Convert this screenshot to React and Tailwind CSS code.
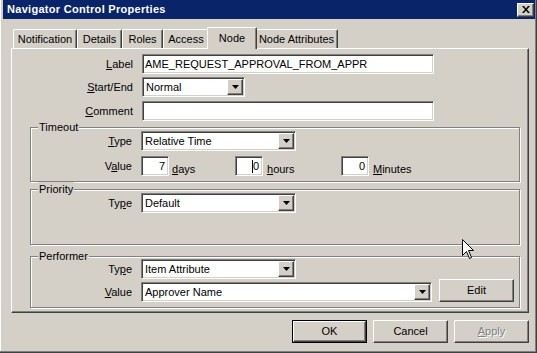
import React from "react";

const sunken =
  "bg-white border border-t-[#808080] border-l-[#808080] border-b-white border-r-white shadow-[inset_1px_1px_0_#404040,inset_-1px_-1px_0_#d4d0c8]";
const raised =
  "bg-[#d4d0c8] border border-t-white border-l-white border-r-[#404040] border-b-[#404040] shadow-[inset_-1px_-1px_0_#808080]";

function Arrow() {
  return (
    <div className={`w-[16px] h-[16px] shrink-0 flex items-center justify-center ${raised}`}>
      <svg width="7" height="4" viewBox="0 0 7 4">
        <path d="M0 0h7L3.5 4z" fill="black" />
      </svg>
    </div>
  );
}

function Select({ w, value }) {
  return (
    <div className={`flex h-[20px] p-[1px] ${w} ${sunken}`}>
      <div className="flex-1 pl-[2px] leading-[16px] whitespace-nowrap overflow-hidden">{value}</div>
      <Arrow />
    </div>
  );
}

function Input({ w, value, right }) {
  return (
    <div
      className={`flex items-center h-[20px] ${right ? "justify-end pr-[3px]" : "pl-[2px]"} ${w} ${sunken}`}
    >
      {value}
    </div>
  );
}

function Lbl({ w, children }) {
  return <div className={`${w} text-right mr-[9px] shrink-0`}>{children}</div>;
}

function Group({ title, className, children }) {
  return (
    <div
      className={`relative ml-[18px] w-[490px] border border-[#808080] shadow-[1px_1px_0_#fff,inset_1px_1px_0_#fff] ${className}`}
    >
      <div className="absolute left-[7px] top-[-8px] bg-[#d4d0c8] px-[1px] leading-[14px]">{title}</div>
      {children}
    </div>
  );
}

function Tab({ w, children }) {
  return (
    <div
      className={`h-[19px] ${w} border-t border-l border-t-white border-l-white border-r border-r-[#404040] shadow-[inset_-1px_0_0_#808080] rounded-t-[2px] flex items-center justify-center leading-[14px]`}
    >
      {children}
    </div>
  );
}

function Btn({ children, def, disabled }) {
  const inner = (
    <div
      className={`w-full h-full flex items-center justify-center ${raised} ${
        disabled ? "text-[#808080] [text-shadow:1px_1px_0_#fff]" : ""
      }`}
    >
      {children}
    </div>
  );
  if (def)
    return <div className="w-[75px] h-[23px] border border-black">{inner}</div>;
  return <div className="w-[75px] h-[23px]">{inner}</div>;
}

export default function App() {
  return (
    <div className="relative w-[537px] h-[353px] bg-[#d4d0c8] font-['Liberation_Sans',Arial,sans-serif] text-[11px] text-black border-r border-b border-r-[#404040] border-b-[#404040] shadow-[inset_-1px_-1px_0_#808080,inset_1px_0_0_#fff] overflow-hidden">
      {/* title bar */}
      <div className="ml-[3px] w-[532px] h-[19px] bg-[#0a246a] flex items-center justify-between">
        <div className="pl-[4px] text-white font-bold text-[11px] leading-[13px] tracking-[0.3px]">
          Navigator Control Properties
        </div>
        <div className={`mr-[1px] w-[17px] h-[14px] flex items-center justify-center ${raised}`}>
          <svg width="8" height="7" viewBox="0 0 8 7">
            <path d="M0 0h2l2 2.5L6 0h2L5 3.5 8 7H6L4 4.5 2 7H0l3-3.5z" fill="black" />
          </svg>
        </div>
      </div>

      {/* tabs */}
      <div className="mt-[8px] h-[21px] pl-[13px] flex items-end relative z-10">
        <Tab w="w-[64px]">Notification</Tab>
        <Tab w="w-[45px]">Details</Tab>
        <Tab w="w-[41px]">Roles</Tab>
        <Tab w="w-[46px]">Access</Tab>
        <div className="relative z-10 -mx-[2px] -mb-[1px] w-[50px] h-[22px] bg-[#d4d0c8] border-t border-l border-t-white border-l-white border-r border-r-[#404040] shadow-[inset_-1px_0_0_#808080] rounded-t-[2px] flex justify-center pt-[3px] leading-[14px]">
          Node
        </div>
        <Tab w="w-[83px]">Node Attributes</Tab>
      </div>

      {/* panel */}
      <div className={`ml-[11px] w-[518px] h-[265px] ${raised} bg-[#d4d0c8] pt-[5px] flex flex-col`}>
        <div className="flex items-center">
          <Lbl w="w-[121px]"><u>L</u>abel</Lbl>
          <Input w="w-[292px]" value="AME_REQUEST_APPROVAL_FROM_APPR" />
        </div>
        <div className="flex items-center mt-[3px]">
          <Lbl w="w-[121px]"><u>S</u>tart/End</Lbl>
          <Select w="w-[103px]" value="Normal" />
        </div>
        <div className="flex items-center mt-[4px]">
          <Lbl w="w-[121px]"><u>C</u>omment</Lbl>
          <Input w="w-[292px]" value="" />
        </div>

        <Group title="Timeout" className="mt-[6px] h-[55px] pt-[3px]">
          <div className="flex items-center">
            <Lbl w="w-[101px]"><u>T</u>ype</Lbl>
            <Select w="w-[155px]" value="Relative Time" />
          </div>
          <div className="flex items-end mt-[5px]">
            <div className="w-[101px] mr-[9px] text-right self-center">V<u>a</u>lue</div>
            <Input w="w-[28px]" value="7" right />
            <div className="ml-[3px] w-[60px] leading-[13px]"><u>d</u>ays</div>
            <div
              className={`ml-[3px] flex items-center justify-end pr-[3px] h-[20px] w-[28px] ${sunken}`}
            >
              <span className="w-[1px] h-[13px] bg-black" />
              0
            </div>
            <div className="ml-[4px] w-[70px] leading-[13px]"><u>h</u>ours</div>
            <Input w="w-[28px] ml-[4px]" value="0" right />
            <div className="ml-[4px] leading-[13px]"><u>M</u>inutes</div>
          </div>
        </Group>

        <Group title="Priority" className="mt-[7px] h-[56px] pt-[3px]">
          <div className="flex items-center">
            <Lbl w="w-[101px]">Ty<u>p</u>e</Lbl>
            <Select w="w-[155px]" value="Default" />
          </div>
        </Group>

        <Group title="Performer" className="mt-[11px] h-[52px] pt-[2px]">
          <div className="flex items-center">
            <Lbl w="w-[101px]">Ty<u>p</u>e</Lbl>
            <Select w="w-[155px]" value="Item Attribute" />
          </div>
          <div className="flex items-start mt-[3px] h-[20px]">
            <div className="w-[101px] mr-[9px] text-right self-center"><u>V</u>alue</div>
            <Select w="w-[291px]" value="Approver Name" />
            <div className="ml-[7px] -mt-[3px]">
              <Btn>Edit</Btn>
            </div>
          </div>
        </Group>
      </div>

      {/* buttons */}
      <div className="mt-[7px] pl-[292px] flex gap-[6px]">
        <Btn def>OK</Btn>
        <Btn>Cancel</Btn>
        <Btn disabled>
          <span><u>A</u>pply</span>
        </Btn>
      </div>

      {/* mouse cursor */}
      <svg className="absolute left-[462px] top-[239px]" width="13" height="21" viewBox="0 0 13 21">
        <path
          d="M0.5 0.5 L0.5 16.5 L4.5 12.5 L7.5 19.5 L9.5 18.5 L6.5 11.5 L11.5 11.5 Z"
          fill="white"
          stroke="black"
          strokeWidth="1"
        />
      </svg>
    </div>
  );
}
